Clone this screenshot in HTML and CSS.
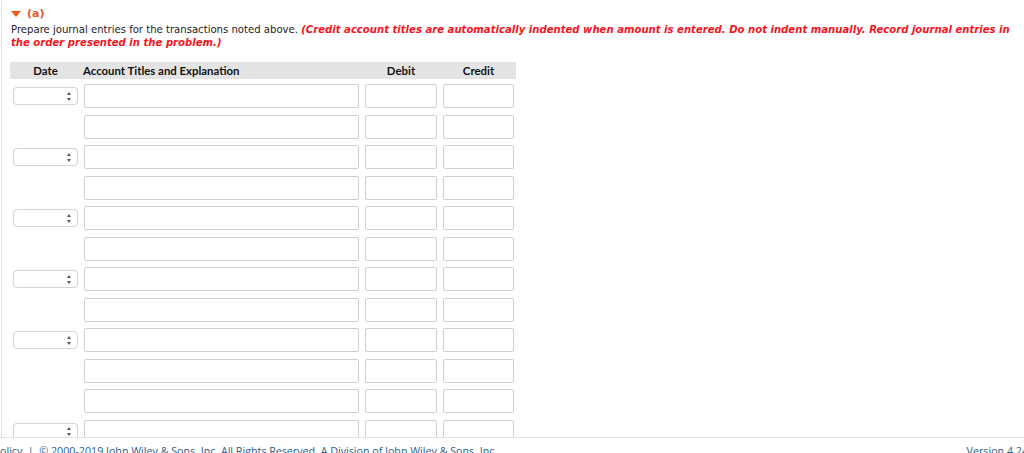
FILE: index.html
```html
<!DOCTYPE html>
<html>
<head>
<meta charset="utf-8">
<link rel="stylesheet" href="styles.css">
</head>
<body>
<div class="viewport">
  <div class="content">
    <div class="part-title"><span class="tri"></span><span class="part-label">(a)</span></div>
    <p class="instr">Prepare journal entries for the transactions noted above. <em class="note">(Credit account titles are automatically indented when amount is entered. Do not indent manually. Record journal entries in the order presented in the problem.)</em></p>
    <div class="journal">
      <div class="jhead">
        <div class="h-date">Date</div>
        <div class="h-acct">Account Titles and Explanation</div>
        <div class="h-num">Debit</div>
        <div class="h-num">Credit</div>
      </div>
      <div class="jrows">
        <div class="sel"><span class="arrows"></span></div><div class="inp"></div><div class="inp"></div><div class="inp"></div>
        <div></div><div class="inp"></div><div class="inp"></div><div class="inp"></div>
        <div class="sel"><span class="arrows"></span></div><div class="inp"></div><div class="inp"></div><div class="inp"></div>
        <div></div><div class="inp"></div><div class="inp"></div><div class="inp"></div>
        <div class="sel"><span class="arrows"></span></div><div class="inp"></div><div class="inp"></div><div class="inp"></div>
        <div></div><div class="inp"></div><div class="inp"></div><div class="inp"></div>
        <div class="sel"><span class="arrows"></span></div><div class="inp"></div><div class="inp"></div><div class="inp"></div>
        <div></div><div class="inp"></div><div class="inp"></div><div class="inp"></div>
        <div class="sel"><span class="arrows"></span></div><div class="inp"></div><div class="inp"></div><div class="inp"></div>
        <div></div><div class="inp"></div><div class="inp"></div><div class="inp"></div>
        <div></div><div class="inp"></div><div class="inp"></div><div class="inp"></div>
        <div class="sel"><span class="arrows"></span></div><div class="inp"></div><div class="inp"></div><div class="inp"></div>
      </div>
    </div>
  </div>
  <footer class="footer">
    <span class="copy">olicy &nbsp;|&nbsp; © 2000-2019 John Wiley &amp; Sons, Inc. All Rights Reserved. A Division of John Wiley &amp; Sons, Inc.</span>
    <span class="version">Version 4.24.14.1</span>
  </footer>
</div>
</body>
</html>
```
FILE: styles.css
```css
html, body {
  margin: 0;
  padding: 0;
  background: #ffffff;
}
.viewport {
  width: 1024px;
  height: 453px;
  overflow: hidden;
}
.content {
  height: 437px;
  overflow: hidden;
  margin-left: 1px;
  border-left: 1px solid #dbe1e8;
  padding-left: 8px;
  box-sizing: border-box;
  font-family: "DejaVu Sans", Verdana, sans-serif;
}
.part-title {
  display: flex;
  align-items: center;
  gap: 6px;
  padding-top: 8px;
  height: 11px;
  margin-left: 1px;
}
.tri {
  width: 0;
  height: 0;
  border-left: 5.5px solid transparent;
  border-right: 5.5px solid transparent;
  border-top: 6px solid #f2571c;
}
.part-label {
  color: #e8571e;
  font-weight: bold;
  font-size: 11px;
  line-height: 11px;
}
.instr {
  margin: 4px 0 0 1px;
  font-size: 10.1px;
  line-height: 13px;
  color: #222;
  width: 1012px;
}
.note {
  color: #f5141e;
  font-weight: bold;
  font-style: italic;
}
.journal {
  margin-top: 13px;
  width: 506px;
  font-family: Lato, "Liberation Sans", sans-serif;
}
.jhead {
  display: grid;
  grid-template-columns: 65px 275px 72px 71px;
  column-gap: 6px;
  padding-left: 3px;
  height: 17px;
  align-items: center;
  background: #e4e4e4;
  font-size: 11.4px;
  font-weight: bold;
  color: #111;
}
.h-date, .h-num {
  text-align: center;
}
.h-acct {
  margin-left: -1px;
}
.jrows {
  display: grid;
  grid-template-columns: 65px 275px 72px 71px;
  column-gap: 6px;
  grid-auto-rows: 24px;
  row-gap: 6.5px;
  padding-left: 3px;
  margin-top: 5px;
}
.inp {
  border: 1px solid #cfcfcf;
  border-radius: 2px;
  background: #fff;
  box-sizing: border-box;
  height: 24px;
}
.sel {
  align-self: center;
  height: 18px;
  border: 1px solid #d4d4d4;
  border-radius: 4px;
  box-sizing: border-box;
  background: #fff;
  box-shadow: 0 0 1px rgba(0,0,0,0.08);
  display: flex;
  align-items: center;
  justify-content: flex-end;
  padding-right: 5px;
}
.arrows {
  position: relative;
  width: 5px;
  height: 9px;
}
.arrows::before, .arrows::after {
  content: "";
  position: absolute;
  left: 0;
  width: 0;
  height: 0;
  border-left: 2.5px solid transparent;
  border-right: 2.5px solid transparent;
}
.arrows::before {
  top: 0;
  border-bottom: 3.5px solid #555;
}
.arrows::after {
  bottom: 0;
  border-top: 3.5px solid #555;
}
.footer {
  border-top: 1px solid #dde2e8;
  height: 16px;
  display: flex;
  justify-content: space-between;
  font-family: "Open Sans", "DejaVu Sans", sans-serif;
  font-size: 10.7px;
  line-height: 26px;
  color: #2b5c8a;
  white-space: nowrap;
}
.copy {
  margin-left: 0;
}
.version {
  margin-right: -28px;
}
```
